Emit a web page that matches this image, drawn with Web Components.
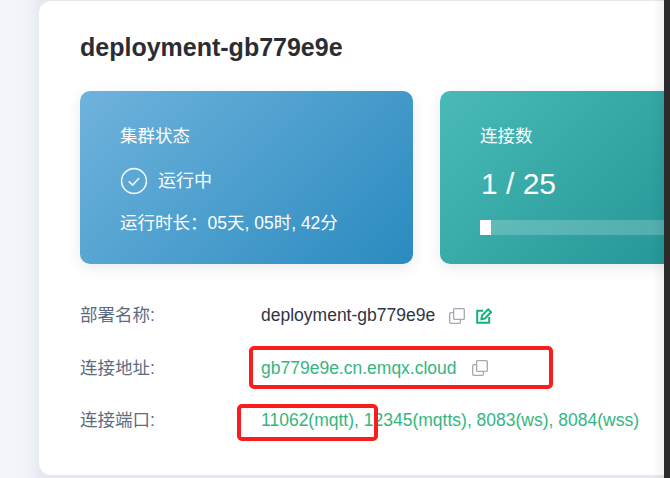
<!DOCTYPE html>
<html>
<head>
<meta charset="utf-8">
<style>
  html, body { margin: 0; height: 100%; overflow: hidden; }
  body { font-family: "Liberation Sans", "Noto Sans CJK SC", sans-serif; }
</style>
</head>
<body>
<deploy-page>
  <deploy-panel title-text="deployment-gb779e9e">
    <stat-card slot="stats" kind="blue" heading="集群状态">
      <div class="state" style="display:flex;align-items:center;gap:10px;height:28px;margin-top:19px">
        <svg width="28" height="28" viewBox="0 0 28 28" fill="none" stroke="#eef7fb" aria-hidden="true">
          <circle cx="14" cy="14" r="12.4" stroke-width="1.6"/>
          <path d="M8.8 14.4l3.8 3.6 6.6-7" stroke-width="1.6"/>
        </svg>
        <span style="font-size:18px;line-height:24px;margin-bottom:1px">运行中</span>
      </div>
      <div style="font-size:17.5px;margin-top:17px;line-height:22px;white-space:nowrap">运行时长：05天, 05时, 42分</div>
    </stat-card>
    <stat-card slot="stats" kind="teal" heading="连接数">
      <div style="font-size:30px;line-height:36px;margin-top:18px;padding-left:1px">1 / 25</div>
      <progress-bar style="margin-top:18px" percent="4.4"></progress-bar>
    </stat-card>

    <info-row label="部署名称:">
      <span style="color:#2e3545">deployment-gb779e9e</span>
      <copy-icon style="margin-left:14px"></copy-icon>
      <edit-icon style="margin-left:11px"></edit-icon>
    </info-row>
    <info-row label="连接地址:">
      <span style="color:#34b680">gb779e9e.cn.emqx.cloud</span>
      <copy-icon style="margin-left:15px"></copy-icon>
    </info-row>
    <info-row label="连接端口:">
      <span style="color:#34b680">11062(mqtt), 12345(mqtts), 8083(ws), 8084(wss)</span>
    </info-row>

    <mark-box slot="marks" style="left:210px;top:345px;width:304px;height:43px"></mark-box>
    <mark-box slot="marks" style="left:198px;top:403px;width:141px;height:37px"></mark-box>
  </deploy-panel>
</deploy-page>

<script>
class DeployPage extends HTMLElement {
  constructor() {
    super();
    this.attachShadow({mode: 'open'}).innerHTML = `
      <style>
        :host { display: flex; width: 670px; height: 478px; background: #f3f6fa; overflow: hidden; }
        .main { flex: 1; min-width: 0; position: relative; overflow: hidden; padding: 1px 0 0 39px;
          background: linear-gradient(90deg, #f3f6fa 0, #eff3f8 30px, #e6eaf0 39px); }
        .main::after { content: ""; position: absolute; top: 0; bottom: 0; right: 0; width: 12px;
          background: linear-gradient(90deg, rgba(0,0,0,0), rgba(0,0,0,.05)); }
        .bar { width: 6px; background: #2b2b2b; flex: none; }
      </style>
      <div class="main"><slot></slot></div>
      <div class="bar"></div>`;
  }
}

class DeployPanel extends HTMLElement {
  constructor() {
    super();
    this.attachShadow({mode: 'open'}).innerHTML = `
      <style>
        :host { display: block; position: relative; width: 800px; height: 474px; box-sizing: border-box;
          padding: 31px 41px; background: #fff; border-radius: 12px; }
        h1 { margin: 0; font-size: 25px; line-height: 30px; font-weight: 700; color: #2b2d33; }
        .stats { display: flex; gap: 27px; margin-top: 29px; margin-bottom: 25.5px; }
      </style>
      <h1></h1>
      <div class="stats"><slot name="stats"></slot></div>
      <slot></slot>
      <slot name="marks"></slot>`;
    this.shadowRoot.querySelector('h1').textContent = this.getAttribute('title-text');
  }
}

class StatCard extends HTMLElement {
  constructor() {
    super();
    this.attachShadow({mode: 'open'}).innerHTML = `
      <style>
        :host { display: block; flex: none; width: 333px; height: 173px; box-sizing: border-box;
          padding: 33px 40px 0; border-radius: 10px; color: #fff; box-shadow: 0 4px 14px rgba(30,50,80,.1); }
        :host([kind=blue]) { background: linear-gradient(135deg, #6fb3dc 0, #2a8bbf 100%); }
        :host([kind=teal]) { background: linear-gradient(135deg, #49bab7 0, #1a8e8e 100%); }
        .head { font-size: 17.5px; line-height: 24px; }
      </style>
      <div class="head"></div>
      <slot></slot>`;
    this.shadowRoot.querySelector('.head').textContent = this.getAttribute('heading');
  }
}

class ProgressBar extends HTMLElement {
  constructor() {
    super();
    this.attachShadow({mode: 'open'}).innerHTML = `
      <style>
        :host { display: block; width: 253px; height: 15px; background: rgba(255,255,255,.2); }
        div { height: 100%; background: #fff; }
      </style>
      <div></div>`;
    this.shadowRoot.querySelector('div').style.width = this.getAttribute('percent') + '%';
  }
}

class InfoRow extends HTMLElement {
  constructor() {
    super();
    this.attachShadow({mode: 'open'}).innerHTML = `
      <style>
        :host { display: flex; align-items: center; height: 52.5px; font-size: 17.5px; white-space: nowrap; }
        .label { flex: none; width: 181px; color: #5d6b80; margin-bottom: 4px; }
        .value { display: flex; align-items: center; }
      </style>
      <div class="label"></div>
      <div class="value"><slot></slot></div>`;
    this.shadowRoot.querySelector('.label').textContent = this.getAttribute('label');
  }
}

class CopyIcon extends HTMLElement {
  constructor() {
    super();
    this.attachShadow({mode: 'open'}).innerHTML = `
      <style>:host { display: inline-flex; } svg { display: block; }</style>
      <svg width="16" height="16" viewBox="0 0 16 16" fill="none" stroke="#a4a8b2" stroke-width="1.3">
        <rect x="4.6" y=".7" width="10.7" height="10.7" rx="1"/>
        <path d="M4.6 4.6H1.7a1 1 0 0 0-1 1v8.7a1 1 0 0 0 1 1h8.7a1 1 0 0 0 1-1v-2.9"/>
      </svg>`;
  }
}

class EditIcon extends HTMLElement {
  constructor() {
    super();
    this.attachShadow({mode: 'open'}).innerHTML = `
      <style>:host { display: inline-flex; } svg { display: block; }</style>
      <svg width="16" height="16" viewBox="0 0 16 16" fill="none" stroke="#12b27c" stroke-width="2">
        <path d="M7 2.8H1.2v12h12V9"/>
        <path d="M5.4 11.2l.6-3.6L12.2 1.4l2.9 2.9-6.2 6.2z"/>
      </svg>`;
  }
}

class MarkBox extends HTMLElement {
  constructor() {
    super();
    this.attachShadow({mode: 'open'}).innerHTML = `
      <style>
        :host { display: block; position: absolute; box-sizing: border-box; border: 4px solid #fb1c1c; border-radius: 5px; pointer-events: none; }
      </style>`;
  }
}

customElements.define('deploy-page', DeployPage);
customElements.define('deploy-panel', DeployPanel);
customElements.define('stat-card', StatCard);
customElements.define('progress-bar', ProgressBar);
customElements.define('info-row', InfoRow);
customElements.define('copy-icon', CopyIcon);
customElements.define('edit-icon', EditIcon);
customElements.define('mark-box', MarkBox);
</script>
</body>
</html>
